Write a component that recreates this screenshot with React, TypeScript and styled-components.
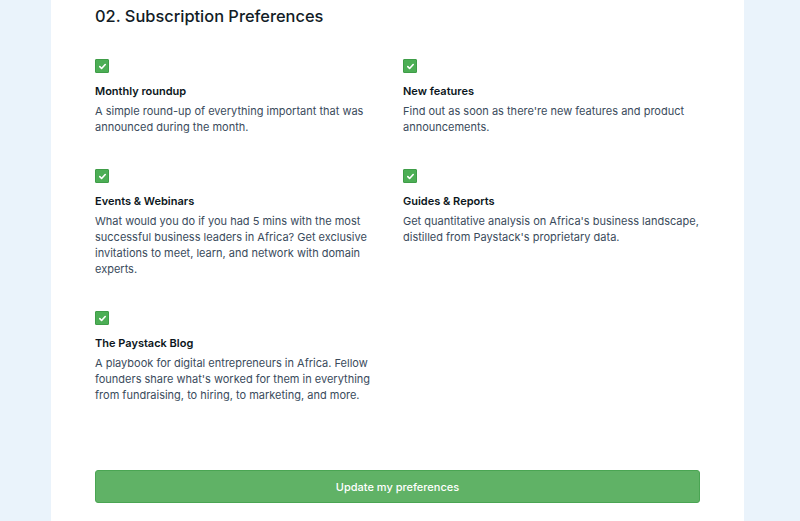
import React from "react";
import styled, { createGlobalStyle } from "styled-components";

interface Preference {
  id: string;
  title: string;
  description: string;
}

const preferences: Preference[] = [
  {
    id: "roundup",
    title: "Monthly roundup",
    description:
      "A simple round-up of everything important that was announced during the month.",
  },
  {
    id: "features",
    title: "New features",
    description:
      "Find out as soon as there're new features and product announcements.",
  },
  {
    id: "events",
    title: "Events & Webinars",
    description:
      "What would you do if you had 5 mins with the most successful business leaders in Africa? Get exclusive invitations to meet, learn, and network with domain experts.",
  },
  {
    id: "guides",
    title: "Guides & Reports",
    description:
      "Get quantitative analysis on Africa's business landscape, distilled from Paystack's proprietary data.",
  },
  {
    id: "blog",
    title: "The Paystack Blog",
    description:
      "A playbook for digital entrepreneurs in Africa. Fellow founders share what's worked for them in everything from fundraising, to hiring, to marketing, and more.",
  },
];

const GlobalStyle = createGlobalStyle`
  html, body {
    margin: 0;
    padding: 0;
    background: #eaf3fb;
    font-family: Inter, "Open Sans", sans-serif;
  }
`;

const CheckIcon = () => (
  <svg width="9" height="9" viewBox="0 0 10 10" fill="none">
    <path
      d="M2 5.2l2 2 4-4.4"
      stroke="#fff"
      strokeWidth="1.8"
      strokeLinecap="round"
      strokeLinejoin="round"
    />
  </svg>
);

const App = () => {
  return (
    <>
      <GlobalStyle />
      <StyledPage>
        <StyledCard>
          <StyledHeading>02. Subscription Preferences</StyledHeading>
          <StyledGrid>
            {preferences.map(({ id, title, description }) => (
              <StyledItem key={id}>
                <StyledCheckbox>
                  <CheckIcon />
                </StyledCheckbox>
                <StyledTitle>{title}</StyledTitle>
                <StyledDescription>{description}</StyledDescription>
              </StyledItem>
            ))}
          </StyledGrid>
          <StyledButton type="button">Update my preferences</StyledButton>
        </StyledCard>
      </StyledPage>
    </>
  );
};

export default App;

const StyledPage = styled.div`
  min-height: 521px;
  padding-left: 51px;
`;

const StyledCard = styled.div`
  width: 693px;
  min-height: 521px;
  box-sizing: border-box;
  background: #ffffff;
  padding: 5px 44px 18px;
`;

const StyledHeading = styled.h2`
  margin: 0;
  font-size: 16.4px;
  line-height: 22px;
  font-weight: 500;
  color: #121c26;
`;

const StyledGrid = styled.div`
  display: grid;
  grid-template-columns: 1fr 1fr;
  column-gap: 11px;
  row-gap: 34px;
  margin-top: 32px;
`;

const StyledItem = styled.div`
  display: flex;
  flex-direction: column;
  align-items: flex-start;
`;

const StyledCheckbox = styled.span`
  display: flex;
  align-items: center;
  justify-content: center;
  width: 14px;
  height: 14px;
  box-sizing: border-box;
  border-radius: 1px;
  background: #4cae55;
  border: 1px solid #3f9d48;
`;

const StyledTitle = styled.h4`
  margin: 10px 0 0;
  font-size: 11px;
  line-height: 16px;
  font-weight: 600;
  color: #0b1620;
`;

const StyledDescription = styled.p`
  margin: 4px 0 0;
  font-size: 11px;
  line-height: 16px;
  color: #3a4b5c;
`;

const StyledButton = styled.button`
  display: block;
  width: 100%;
  height: 33px;
  margin-top: 67px;
  border: 1px solid #4aa553;
  border-radius: 3px;
  background: #60b266;
  color: #ffffff;
  font-family: Inter, "Open Sans", sans-serif;
  font-size: 11px;
  font-weight: 500;
  cursor: pointer;
`;
